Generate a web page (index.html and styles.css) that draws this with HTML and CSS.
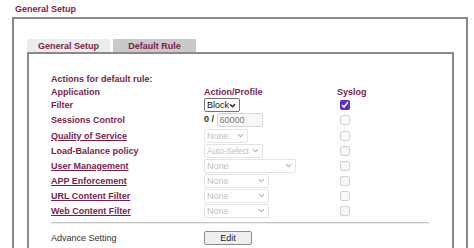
FILE: index.html
```html
<!DOCTYPE html>
<html lang="en">
<head>
    <meta charset="UTF-8">
    <meta name="viewport" content="width=device-width, initial-scale=1.0">
    <title>General Setup</title>
    <link rel="stylesheet" href="styles.css">
</head>
<body>
    <div class="title">General Setup</div>
    <div class="outer">
        <div class="tabs">
            <div class="tab">General Setup</div>
            <div class="tab active">Default Rule</div>
        </div>
        <div class="panel">
            <table class="rules">
                <tr class="head"><td colspan="3">Actions for default rule:</td></tr>
                <tr class="head">
                    <td class="col-app">Application</td>
                    <td class="col-act">Action/Profile</td>
                    <td>Syslog</td>
                </tr>
                <tr class="r1">
                    <td>Filter</td>
                    <td><select class="sel w-block"><option>Block</option><option>Pass</option></select></td>
                    <td><input type="checkbox" class="chk" checked></td>
                </tr>
                <tr class="r2">
                    <td>Sessions Control</td>
                    <td><span class="plain">0 /</span> <input type="text" class="num" value="60000" disabled></td>
                    <td><input type="checkbox" class="chk" disabled></td>
                </tr>
                <tr>
                    <td><a href="#">Quality of Service</a></td>
                    <td><select class="sel w-qos" disabled><option>None</option></select></td>
                    <td><input type="checkbox" class="chk" disabled></td>
                </tr>
                <tr>
                    <td>Load-Balance policy</td>
                    <td><select class="sel w-lb" disabled><option>Auto-Select</option></select></td>
                    <td><input type="checkbox" class="chk" disabled></td>
                </tr>
                <tr>
                    <td><a href="#">User Management</a></td>
                    <td><select class="sel w-um" disabled><option>None</option></select></td>
                    <td><input type="checkbox" class="chk" disabled></td>
                </tr>
                <tr>
                    <td><a href="#">APP Enforcement</a></td>
                    <td><select class="sel w-none" disabled><option>None</option></select></td>
                    <td><input type="checkbox" class="chk" disabled></td>
                </tr>
                <tr>
                    <td><a href="#">URL Content Filter</a></td>
                    <td><select class="sel w-none" disabled><option>None</option></select></td>
                    <td><input type="checkbox" class="chk" disabled></td>
                </tr>
                <tr>
                    <td><a href="#">Web Content Filter</a></td>
                    <td><select class="sel w-none" disabled><option>None</option></select></td>
                    <td><input type="checkbox" class="chk" disabled></td>
                </tr>
            </table>
            <div class="divider"></div>
            <div class="advance">
                <span class="adv-label">Advance Setting</span>
                <button class="btn">Edit</button>
            </div>
        </div>
    </div>
</body>
</html>
```

FILE: styles.css
```css
html, body {
    overflow: hidden;
}
body {
    margin: 0;
    font-family: "Liberation Sans", Arial, sans-serif;
    font-size: 9px;
    background: #fff;
}
.title {
    height: 17px;
    line-height: 18px;
    padding-left: 15px;
    font-weight: bold;
    color: #7b1d4b;
}
.outer {
    margin-left: 12px;
    width: 427px;
    border: 2px solid #8a8a8a;
    border-bottom: none;
    padding: 20px 12px 0 13px;
    height: 209px;
}
.tabs {
    display: flex;
    gap: 3px;
    height: 13px;
}
.tab {
    width: 83px;
    background: #ececec;
    color: #7b1d4b;
    font-weight: bold;
    text-align: center;
    line-height: 14px;
}
.tab.active {
    background: #c9c9c9;
}
.panel {
    border: 2px solid #8a8a8a;
    border-bottom: none;
    padding: 18px 0 0 22px;
    height: 176px;
}
.rules {
    border-collapse: collapse;
}
.rules td {
    padding: 0;
    height: 15px;
    vertical-align: middle;
    font-weight: bold;
    color: #7b1d4b;
    white-space: nowrap;
}
.rules tr.head td {
    height: 13px;
}
.rules tr.r1 td {
    height: 14px;
}
.rules tr.r2 td {
    height: 16px;
}
.rules a {
    color: #7b1d4b;
}
.col-app {
    width: 153px;
}
.col-act {
    width: 133px;
}
.plain {
    color: #333;
}
.sel {
    -webkit-appearance: none;
    appearance: none;
    font-family: "Liberation Sans", Arial, sans-serif;
    font-size: 9px;
    height: 14px;
    padding: 0 0 0 2px;
    margin: 0;
    border: 1px solid #767676;
    border-radius: 2px;
    color: #111;
    background: #fff url("data:image/svg+xml,%3Csvg xmlns='http://www.w3.org/2000/svg' width='8' height='6' viewBox='0 0 8 6'%3E%3Cpath d='M1 1.5 L4 4.5 L7 1.5' fill='none' stroke='%23222' stroke-width='1.6'/%3E%3C/svg%3E") no-repeat right 3px center;
    background-size: 7px 5px;
    vertical-align: middle;
}
.sel:disabled {
    border-color: #d9d9d9;
    color: #a8a8a8;
    background-image: url("data:image/svg+xml,%3Csvg xmlns='http://www.w3.org/2000/svg' width='8' height='6' viewBox='0 0 8 6'%3E%3Cpath d='M1 1.5 L4 4.5 L7 1.5' fill='none' stroke='%23a0a0a0' stroke-width='1.4'/%3E%3C/svg%3E");
}
.w-block { width: 36px; }
.w-qos { width: 44px; }
.w-lb { width: 59px; padding-left: 2px; font-size: 8.5px; letter-spacing: -0.2px; }
.w-um { width: 92px; }
.w-none { width: 65px; }
.num {
    font-family: "Liberation Sans", Arial, sans-serif;
    font-size: 9px;
    width: 40px;
    height: 10px;
    padding: 1px 2px;
    margin: 0;
    border: 1px solid #d6d6d6;
    border-radius: 2px;
    background: #f7f7f7;
    color: #777;
    vertical-align: middle;
}
.chk {
    width: 10px;
    height: 10px;
    margin: 0 0 0 3px;
    vertical-align: middle;
    accent-color: #5f2bd6;
}
.divider {
    width: 378px;
    height: 0;
    border-top: 1px solid #c4c4c4;
    border-bottom: 1px solid #ececec;
    margin-top: 4px;
}
.advance {
    display: flex;
    align-items: center;
    height: 14px;
    margin-top: 7px;
}
.adv-label {
    width: 153px;
    color: #333;
}
.btn {
    font-family: "Liberation Sans", Arial, sans-serif;
    font-size: 9px;
    width: 48px;
    height: 14px;
    padding: 0;
    background: #efefef;
    border: 1px solid #8a8a8a;
    border-radius: 2px;
    color: #222;
}
```
